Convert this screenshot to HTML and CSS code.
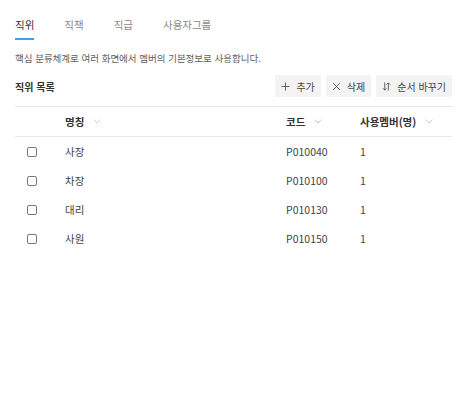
FILE: index.html
```html
<!DOCTYPE html>
<html lang="ko">
<head>
<meta charset="utf-8">
<link rel="stylesheet" href="styles.css">
</head>
<body>
<div class="page">
  <nav class="tabs">
    <span class="tab active">직위</span>
    <span class="tab">직책</span>
    <span class="tab">직급</span>
    <span class="tab">사용자그룹</span>
  </nav>
  <p class="desc">핵심 분류체계로 여러 화면에서 멤버의 기본정보로 사용합니다.</p>
  <div class="toolbar">
    <h2 class="title">직위 목록</h2>
    <div class="actions">
      <button class="btn"><svg viewBox="0 0 10 10" class="ico"><path d="M5 0.5V9.5M0.5 5H9.5" /></svg>추가</button>
      <button class="btn"><svg viewBox="0 0 10 10" class="ico"><path d="M1.2 1.2L8.8 8.8M8.8 1.2L1.2 8.8" /></svg>삭제</button>
      <button class="btn"><svg viewBox="0 0 10 10" class="ico"><path d="M3 0.5V9M1 7L3 9L5 7M7 9.5V1M5 3L7 1L9 3" /></svg>순서 바꾸기</button>
    </div>
  </div>
  <table class="grid">
    <colgroup>
      <col class="w-check">
      <col class="w-name">
      <col class="w-code">
      <col>
    </colgroup>
    <thead>
      <tr>
        <th></th>
        <th>명칭<svg class="chev" viewBox="0 0 8 5"><path d="M0.5 0.5L4 4L7.5 0.5" /></svg></th>
        <th>코드<svg class="chev" viewBox="0 0 8 5"><path d="M0.5 0.5L4 4L7.5 0.5" /></svg></th>
        <th>사용멤버(명)<svg class="chev" viewBox="0 0 8 5"><path d="M0.5 0.5L4 4L7.5 0.5" /></svg></th>
      </tr>
    </thead>
    <tbody>
      <tr><td class="c-check"><span class="box"></span></td><td>사장</td><td>P010040</td><td>1</td></tr>
      <tr><td class="c-check"><span class="box"></span></td><td>차장</td><td>P010100</td><td>1</td></tr>
      <tr><td class="c-check"><span class="box"></span></td><td>대리</td><td>P010130</td><td>1</td></tr>
      <tr><td class="c-check"><span class="box"></span></td><td>사원</td><td>P010150</td><td>1</td></tr>
    </tbody>
  </table>
</div>
</body>
</html>
```
FILE: styles.css
```css
html, body {
  margin: 0;
  background: #fff;
}
body {
  font-family: "Noto Sans CJK KR", "Noto Sans", sans-serif;
  color: #333;
}
.page {
  padding: 15px 22px 0 15px;
}
.tabs {
  display: flex;
  gap: 30px;
}
.tab {
  font-size: 10.5px;
  line-height: 20px;
  color: #8a8a8a;
  padding-bottom: 3px;
  border-bottom: 2px solid transparent;
}
.tab.active {
  color: #333;
  border-bottom-color: #4f9be0;
}
.desc {
  margin: 11px 0 0;
  font-size: 9.5px;
  line-height: 14px;
  color: #5e5e5e;
}
.toolbar {
  display: flex;
  align-items: center;
  justify-content: space-between;
  margin-top: 10px;
}
.title {
  margin: 0;
  font-size: 10px;
  font-weight: 700;
  color: #333;
}
.actions {
  display: flex;
  gap: 5px;
}
.btn {
  display: flex;
  align-items: center;
  gap: 6px;
  height: 22px;
  padding: 0 6px 0 6px;
  border: 0;
  border-radius: 2px;
  background: #f3f3f3;
  font-family: inherit;
  font-size: 10px;
  color: #444;
}
.ico {
  width: 9px;
  height: 9px;
  fill: none;
  stroke: #555;
  stroke-width: 1;
}
.grid {
  width: 100%;
  margin-top: 9px;
  border-collapse: collapse;
  table-layout: fixed;
  font-size: 10.5px;
}
.w-check {
  width: 50px;
}
.w-name {
  width: 221px;
}
.w-code {
  width: 74px;
}
.grid th {
  height: 29px;
  padding: 0;
  text-align: left;
  font-weight: 700;
  color: #333;
  border-top: 1px solid #e8e8e8;
  border-bottom: 1px solid #e8e8e8;
}
.grid td {
  height: 29px;
  padding: 0;
  color: #444;
}
.grid td.c-check {
  padding-left: 12px;
}
.box {
  display: block;
  width: 8px;
  height: 8px;
  border: 1px solid #777;
  border-radius: 2px;
}
.chev {
  width: 8px;
  height: 5px;
  margin-left: 9px;
  vertical-align: 2px;
  fill: none;
  stroke: #ccc;
  stroke-width: 1;
}
```
